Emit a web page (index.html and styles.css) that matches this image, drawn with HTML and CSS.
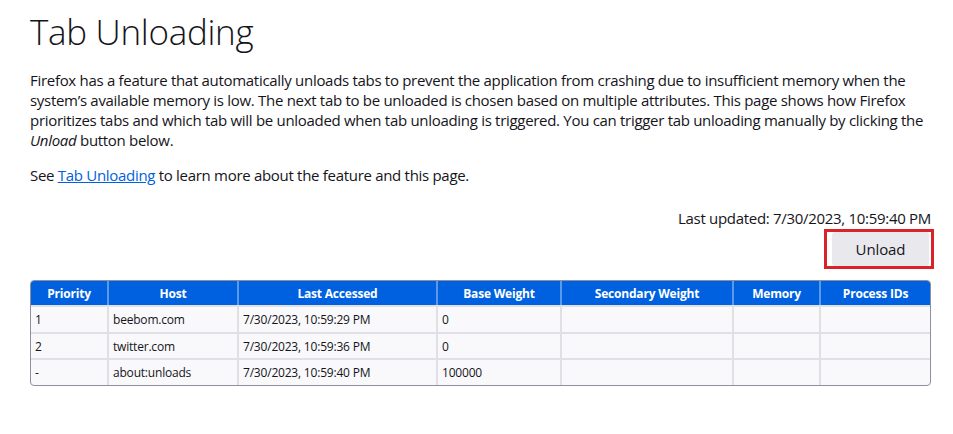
FILE: index.html
```html
<!DOCTYPE html>
<html>
<head>
<meta charset="utf-8">
<link rel="stylesheet" href="styles.css">
</head>
<body>
<main class="page">
  <h1 class="title">Tab Unloading</h1>
  <p class="intro">Firefox has a feature that automatically unloads tabs to prevent the application from crashing due to insufficient memory when the system’s available memory is low. The next tab to be unloaded is chosen based on multiple attributes. This page shows how Firefox prioritizes tabs and which tab will be unloaded when tab unloading is triggered. You can trigger tab unloading manually by clicking the <em>Unload</em> button below.</p>
  <p class="intro">See <a href="#" class="link">Tab Unloading</a> to learn more about the feature and this page.</p>
  <div class="controls">
    <div class="updated">Last updated: 7/30/2023, 10:59:40 PM</div>
    <div class="btn-wrap"><button class="btn">Unload</button></div>
  </div>
  <table class="tbl">
    <thead>
      <tr>
        <th class="c1">Priority</th>
        <th class="c2">Host</th>
        <th class="c3">Last Accessed</th>
        <th class="c4">Base Weight</th>
        <th class="c5">Secondary Weight</th>
        <th class="c6">Memory</th>
        <th class="c7">Process IDs</th>
      </tr>
    </thead>
    <tbody>
      <tr><td>1</td><td>beebom.com</td><td>7/30/2023, 10:59:29 PM</td><td>0</td><td></td><td></td><td></td></tr>
      <tr><td>2</td><td>twitter.com</td><td>7/30/2023, 10:59:36 PM</td><td>0</td><td></td><td></td><td></td></tr>
      <tr><td>-</td><td>about:unloads</td><td>7/30/2023, 10:59:40 PM</td><td>100000</td><td></td><td></td><td></td></tr>
    </tbody>
  </table>
</main>
</body>
</html>
```
FILE: styles.css
```css
html, body { margin: 0; padding: 0; background: #fff; }
body {
  font-family: "Open Sans", "Noto Sans", sans-serif;
  color: #15141a;
}
.page {
  width: 901px;
  padding: 0 0 0 30px;
}
.title {
  margin: 0;
  padding-top: 9px;
  font-weight: 300;
  font-size: 35px;
  line-height: 46px;
  letter-spacing: -0.3px;
  color: #15141a;
}
.intro {
  margin: 15px 0 0 0;
  font-size: 15px;
  line-height: 20px;
  letter-spacing: -0.3px;
  width: 898px;
}
.intro + .intro { margin-top: 15px; }
.link { color: #0061e0; }
.controls {
  margin-top: 23px;
  display: flex;
  flex-direction: column;
  align-items: flex-end;
}
.updated {
  font-size: 15px;
  line-height: 20px;
  letter-spacing: -0.3px;
}
.btn-wrap {
  margin-top: 1px;
  margin-right: -3px;
  border: 3px solid #d9232b;
  padding: 0 2px 0 5px;
  height: 34px;
  display: flex;
  align-items: center;
  background: #fff;
}
.btn {
  width: 97px;
  height: 34px;
  border: none;
  border-radius: 3px;
  background: #e9e9ed;
  font-family: inherit;
  font-size: 15px;
  letter-spacing: -0.1px;
  color: #15141a;
}
.tbl {
  margin-top: 11px;
  width: 901px;
  border-collapse: separate;
  border-spacing: 0;
  border: 1px solid #8f8f9d;
  border-radius: 4px;
  overflow: hidden;
  font-size: 12px;
  letter-spacing: -0.2px;
  background: #f9f9fb;
  table-layout: fixed;
}
.tbl th {
  background: #0061e0;
  color: #fff;
  font-weight: 700;
  height: 24px;
  padding: 0 4px;
  border-left: 2px solid #5a9ae8;
  text-align: center;
}
.tbl td {
  height: 24.7px;
  padding: 0 4px;
  border-left: 2px solid #e0e0e6;
  border-top: 2px solid #e0e0e6;
  color: #15141a;
}
.tbl tr > :first-child { border-left: none; }
.c1 { width: 68px; }
.c2 { width: 120px; }
.c3 { width: 189px; }
.c4 { width: 114px; }
.c5 { width: 162px; }
.c6 { width: 77px; }
```
